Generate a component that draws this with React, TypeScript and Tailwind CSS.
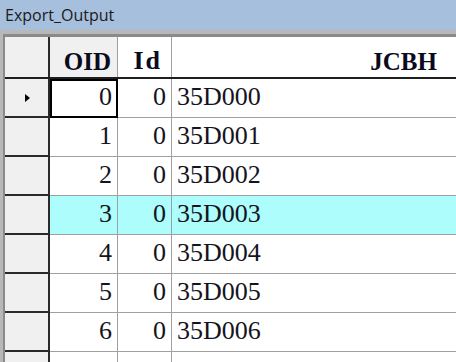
import React from "react";

const rows = [0, 1, 2, 3, 4, 5, 6];

function RowHeader({ current }: { current?: boolean }) {
  return (
    <div className="w-[45px] h-full shrink-0 bg-[#f0f0f0] border-r-2 border-b-2 border-[#2a2a2a] flex items-center justify-center">
      {current && (
        <svg width="5" height="8" viewBox="0 0 5 8" className="ml-[1px]">
          <path d="M0 0 L5 4 L0 8 Z" fill="#000" />
        </svg>
      )}
    </div>
  );
}

export default function App() {
  const serif = { fontFamily: '"Liberation Serif", "Times New Roman", serif' };
  return (
    <div className="w-[456px] h-[362px] overflow-hidden bg-white flex flex-col">
      <div
        className="h-[30px] shrink-0 bg-[#a6bfdc] flex items-center pl-[5px] text-[16px] text-[#1a1a1a]"
        style={{ fontFamily: '"Open Sans", "Noto Sans", sans-serif' }}
      >
        Export_Output
      </div>
      <div className="flex-1 bg-[#b8b8b8] pl-[3px] pt-[4px] flex flex-col min-h-0">
        <div className="flex-1 border-l-2 border-t-[3px] border-[#8a8a8a] bg-white flex flex-col min-h-0" style={serif}>
          {/* header */}
          <div className="h-[42px] shrink-0 flex border-b-2 border-[#1e1e1e]">
            <div className="w-[45px] shrink-0 bg-[#f0f0f0] border-r-2 border-[#2a2a2a]" />
            <div className="w-[68px] shrink-0 bg-[#f0f0f0] border-r border-[#a0a0a0] flex items-end justify-end pr-[6px] pb-[3px] text-[25px] font-bold text-[#0a0a1e] leading-none">
              OID
            </div>
            <div className="w-[54px] shrink-0 border-r border-[#a0a0a0] flex items-end justify-end pr-[9px] pb-[3px] text-[26px] font-bold text-[#0a0a1e] leading-none tracking-[2px]">
              Id
            </div>
            <div className="flex-1 flex items-end justify-end pr-[19px] pb-[3px] text-[25px] font-bold text-[#0a0a1e] leading-none">
              JCBH
            </div>
          </div>
          {[...rows, 7].map((r) => {
            const hl = r === 3;
            const bg = hl ? "bg-[#adfdfd]" : "bg-white";
            return (
              <div key={r} className="h-[39px] shrink-0 flex text-[26px] text-[#141420] leading-none">
                <RowHeader current={r === 0} />
                <div
                  className={`relative w-[68px] shrink-0 border-r border-b border-[#a0a0a0] flex items-center justify-end pr-[5px] pb-[2px] ${bg}`}
                >
                  {r < 7 ? r : ""}
                  {r === 0 && (
                    <div className="absolute left-0 top-0 right-[-1px] bottom-[-1px] border-2 border-black" />
                  )}
                </div>
                <div
                  className={`w-[54px] shrink-0 border-r border-b border-[#a0a0a0] flex items-center justify-end pr-[5px] pb-[2px] ${bg}`}
                >
                  {r < 7 ? 0 : ""}
                </div>
                <div className={`flex-1 border-b border-[#a0a0a0] flex items-center pl-[5px] pb-[2px] ${bg}`}>
                  {r < 7 ? `35D00${r}` : ""}
                </div>
              </div>
            );
          })}
        </div>
      </div>
    </div>
  );
}
